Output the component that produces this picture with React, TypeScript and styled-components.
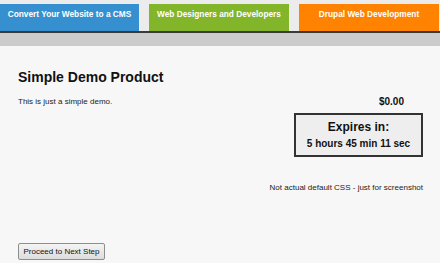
import React from "react";
import styled, { createGlobalStyle } from "styled-components";

const GlobalStyle = createGlobalStyle`
  html, body {
    margin: 0;
    padding: 0;
    background: #f7f7f7;
    font-family: "Liberation Sans", Arial, sans-serif;
    color: #111;
  }
`;

// ---------------- Header ----------------

const Header = styled.div`
  background: #ececec;
  padding-top: 4px;
`;

const Tabs = styled.div`
  display: flex;
  gap: 10px;
  height: 27px;
`;

const tabColors: Record<string, string> = {
  blue: "#3690cf",
  green: "#82b52a",
  orange: "#ff8200",
};

const Tab = styled.div<{ $color: string }>`
  width: 140px;
  background: ${({ $color }) => tabColors[$color]};
  color: #fff;
  font-weight: bold;
  font-size: 8.3px;
  line-height: 10px;
  white-space: nowrap;
  text-align: center;
  padding-top: 5px;
  box-sizing: border-box;
  &:first-child {
    width: 139px;
  }
`;

const DarkBar = styled.div`
  height: 2px;
  background: #3a3a3a;
`;

const GreyBand = styled.div`
  height: 13px;
  background: #cccccc;
`;

// ---------------- Content ----------------

const Content = styled.div`
  padding: 0 17px 0 18px;
`;

const Title = styled.h1`
  margin: 21px 0 0;
  font-size: 14px;
  font-weight: bold;
  line-height: 20px;
`;

const Row = styled.div`
  display: flex;
  justify-content: space-between;
  margin-top: 9px;
`;

const Desc = styled.p`
  margin: 0;
  font-size: 8px;
  color: #222;
  line-height: 12px;
`;

const Side = styled.div`
  display: flex;
  flex-direction: column;
  align-items: flex-end;
`;

const Price = styled.div`
  font-size: 10px;
  font-weight: bold;
  line-height: 12px;
  margin-right: 19px;
`;

const ExpiryBox = styled.div`
  margin-top: 5px;
  width: 129px;
  height: 44px;
  box-sizing: border-box;
  border: 2px solid #333;
  background: #eeeeee;
  text-align: center;
  font-weight: bold;
`;

const ExpiryTitle = styled.div`
  font-size: 12px;
  line-height: 16px;
  margin-top: 4px;
`;

const ExpiryTime = styled.div`
  font-size: 10px;
  line-height: 12px;
  margin-top: 3px;
`;

const Note = styled.p`
  margin: 25px 0 0;
  text-align: right;
  font-size: 8px;
  line-height: 12px;
  color: #222;
`;

const Button = styled.button`
  display: block;
  margin-top: 49px;
  width: 87px;
  height: 17px;
  padding: 0;
  font-family: "Liberation Sans", Arial, sans-serif;
  font-size: 8px;
  color: #111;
  background: linear-gradient(#f4f4f4, #dddddd);
  border: 1px solid #8e8e8e;
  border-radius: 2px;
`;

// ---------------- Component ----------------

const App: React.FC = () => {
  return (
    <>
      <GlobalStyle />
      <Header>
        <Tabs>
          <Tab $color="blue">Convert Your Website to a CMS</Tab>
          <Tab $color="green">Web Designers and Developers</Tab>
          <Tab $color="orange">Drupal Web Development</Tab>
        </Tabs>
      </Header>
      <DarkBar />
      <GreyBand />
      <Content>
        <Title>Simple Demo Product</Title>
        <Row>
          <Desc>This is just a simple demo.</Desc>
          <Side>
            <Price>$0.00</Price>
            <ExpiryBox>
              <ExpiryTitle>Expires in:</ExpiryTitle>
              <ExpiryTime>5 hours 45 min 11 sec</ExpiryTime>
            </ExpiryBox>
          </Side>
        </Row>
        <Note>Not actual default CSS - just for screenshot</Note>
        <Button>Proceed to Next Step</Button>
      </Content>
    </>
  );
};

export default App;
